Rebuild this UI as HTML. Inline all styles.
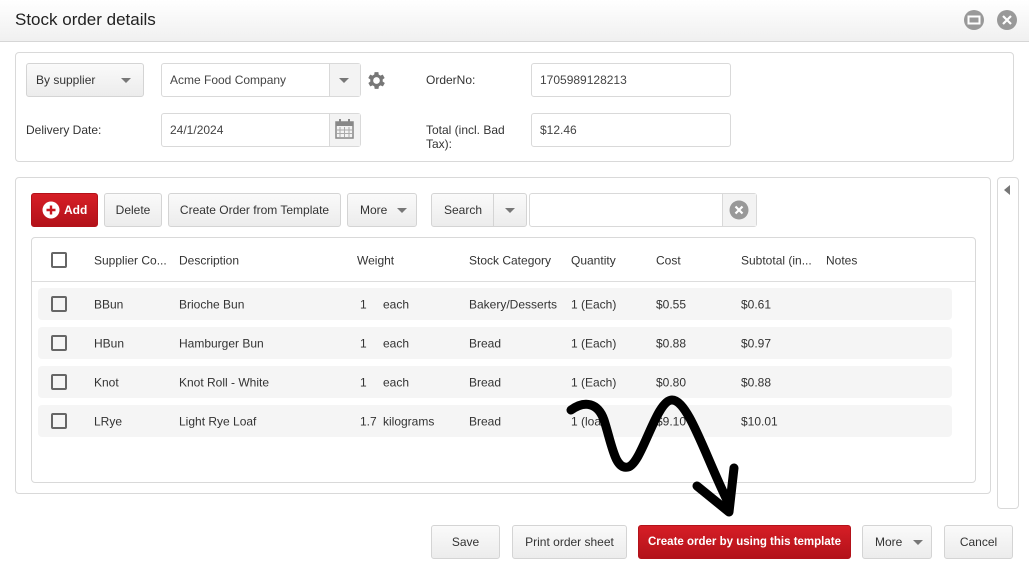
<!DOCTYPE html>
<html><head><style>
*{box-sizing:border-box;margin:0;padding:0}
body{width:1029px;height:575px;background:#fff;font-family:"Liberation Sans",Arial,sans-serif;font-size:12px;color:#333;position:relative;overflow:hidden}
.a{position:absolute}
.box{position:absolute;border:1px solid #d9d9d9;border-radius:4px;background:#fff}
.btn{position:absolute;border:1px solid #d4d4d4;border-radius:3px;background:linear-gradient(#fafafa,#ececec);display:flex;align-items:center;justify-content:center;font-size:12px;color:#333}
.red{background:linear-gradient(#d61e26,#b3121a);border-color:#b3121a;color:#fff;font-weight:bold}
.tri{width:0;height:0;border-left:5px solid transparent;border-right:5px solid transparent;border-top:5px solid #777;position:absolute}
.cb{position:absolute;width:16px;height:16px;border:2px solid #666;border-radius:2px;left:19px}
.row{position:absolute;left:6px;width:914px;height:32px;background:#f5f5f5;border-radius:4px}
.row span,.hd span{position:absolute;top:50%;transform:translateY(-45%);white-space:nowrap}
</style></head><body>
<div class="a" style="left:0;top:0;width:1029px;height:42px;background:linear-gradient(#fff,#f0f0f0);border-bottom:1px solid #d6d6d6"></div>
<div class="a" style="left:15px;top:10px;font-size:17px;color:#222">Stock order details</div>
<svg class="a" style="left:963px;top:9px" width="56" height="22"><circle cx="11" cy="11" r="10" fill="#999"/><rect x="5.5" y="7.5" width="11" height="7" fill="none" stroke="#fff" stroke-width="2"/><circle cx="44" cy="11" r="10" fill="#999"/><path d="M40 7l8 8M48 7l-8 8" stroke="#fff" stroke-width="2.2"/></svg>

<div class="box" style="left:15px;top:52px;width:999px;height:110px"></div>
<div class="btn" style="left:26px;top:63px;width:118px;height:34px;justify-content:flex-start;padding-left:9px">By supplier</div><div class="tri" style="left:121px;top:78px"></div>
<div class="box" style="left:161px;top:63px;width:200px;height:34px;border-radius:3px"></div>
<div class="a" style="left:170px;top:73px;color:#444">Acme Food Company</div>
<div class="a" style="left:329px;top:64px;width:31px;height:32px;border-left:1px solid #d9d9d9;background:#f3f3f3"></div><div class="tri" style="left:339px;top:78px"></div>
<svg class="a" style="left:365px;top:69px" width="23" height="23" viewBox="0 0 24 24"><path fill="#777" d="M19.4 13a7.5 7.5 0 000-2l2.1-1.6-2-3.5-2.5 1a7.6 7.6 0 00-1.7-1L15 3.2h-4l-.4 2.7a7.6 7.6 0 00-1.7 1l-2.5-1-2 3.5L6.6 11a7.5 7.5 0 000 2l-2.1 1.6 2 3.5 2.5-1a7.6 7.6 0 001.7 1l.4 2.7h4l.4-2.7a7.6 7.6 0 001.7-1l2.5 1 2-3.5zM13 15.5a3.5 3.5 0 110-7 3.5 3.5 0 010 7z" transform="translate(-1 0)"/></svg>
<div class="a" style="left:426px;top:73px">OrderNo:</div>
<div class="box" style="left:531px;top:63px;width:200px;height:34px;border-radius:3px"></div><div class="a" style="left:540px;top:73px;color:#444">1705989128213</div>
<div class="a" style="left:26px;top:123px">Delivery Date:</div>
<div class="box" style="left:161px;top:113px;width:200px;height:34px;border-radius:3px"></div><div class="a" style="left:170px;top:123px;color:#444">24/1/2024</div>
<div class="a" style="left:329px;top:114px;width:31px;height:32px;border-left:1px solid #d9d9d9;background:#f3f3f3"></div>
<svg class="a" style="left:335px;top:119px" width="19" height="20"><rect x="1" y="3" width="17" height="16" fill="none" stroke="#888" stroke-width="1.5"/><rect x="1" y="3" width="17" height="4" fill="#888"/><rect x="4" y="0" width="2" height="5" fill="#888"/><rect x="13" y="0" width="2" height="5" fill="#888"/><path d="M5 8v10M9.5 8v10M14 8v10M2 11h15M2 14.5h15" stroke="#aaa"/></svg>
<div class="a" style="left:426px;top:123px;line-height:14px">Total (incl. Bad<br>Tax):</div>
<div class="box" style="left:531px;top:113px;width:200px;height:34px;border-radius:3px"></div><div class="a" style="left:540px;top:123px;color:#444">$12.46</div>

<div class="box" style="left:15px;top:177px;width:976px;height:317px"></div>
<div class="box" style="left:997px;top:177px;width:22px;height:332px"></div>
<div class="a" style="left:1004px;top:185px;width:0;height:0;border-top:5px solid transparent;border-bottom:5px solid transparent;border-right:6px solid #777"></div>

<div class="btn red" style="left:31px;top:193px;width:67px;height:34px;justify-content:flex-start;padding-left:32px">Add</div>
<svg class="a" style="left:42px;top:201px" width="18" height="18"><circle cx="9" cy="9" r="8.5" fill="#fff"/><path d="M9 4.5v9M4.5 9h9" stroke="#c8161e" stroke-width="2.4"/></svg>
<div class="btn" style="left:104px;top:193px;width:58px;height:34px">Delete</div>
<div class="btn" style="left:168px;top:193px;width:173px;height:34px">Create Order from Template</div>
<div class="btn" style="left:347px;top:193px;width:70px;height:34px;justify-content:flex-start;padding-left:12px">More</div><div class="tri" style="left:397px;top:208px"></div>
<div class="btn" style="left:431px;top:193px;width:96px;height:34px;justify-content:flex-start;padding-left:12px">Search</div>
<div class="a" style="left:493px;top:194px;height:32px;border-left:1px solid #d4d4d4"></div><div class="tri" style="left:505px;top:208px"></div>
<div class="box" style="left:529px;top:193px;width:228px;height:34px;border-radius:3px"></div>
<div class="a" style="left:722px;top:194px;width:34px;height:32px;border-left:1px solid #d9d9d9;background:#f3f3f3"></div>
<svg class="a" style="left:729px;top:200px" width="20" height="20"><circle cx="10" cy="10" r="9.5" fill="#999"/><path d="M6.5 6.5l7 7M13.5 6.5l-7 7" stroke="#fff" stroke-width="2.2"/></svg>

<div class="box" style="left:31px;top:237px;width:945px;height:246px">
 <div class="hd a" style="left:0;top:0;width:943px;height:44px;border-bottom:1px solid #ddd">
  <div class="cb" style="top:14px"></div>
  <span style="left:62px">Supplier Co...</span><span style="left:147px">Description</span><span style="left:325px">Weight</span><span style="left:437px">Stock Category</span><span style="left:539px">Quantity</span><span style="left:624px">Cost</span><span style="left:709px">Subtotal (in...</span><span style="left:794px">Notes</span>
 </div>
 <div class="row" style="top:50px"><div class="cb" style="left:13px;top:8px"></div><span style="left:56px">BBun</span><span style="left:141px">Brioche Bun</span><span style="left:322px">1</span><span style="left:345px">each</span><span style="left:431px">Bakery/Desserts</span><span style="left:533px">1 (Each)</span><span style="left:618px">$0.55</span><span style="left:703px">$0.61</span></div>
 <div class="row" style="top:89px"><div class="cb" style="left:13px;top:8px"></div><span style="left:56px">HBun</span><span style="left:141px">Hamburger Bun</span><span style="left:322px">1</span><span style="left:345px">each</span><span style="left:431px">Bread</span><span style="left:533px">1 (Each)</span><span style="left:618px">$0.88</span><span style="left:703px">$0.97</span></div>
 <div class="row" style="top:128px"><div class="cb" style="left:13px;top:8px"></div><span style="left:56px">Knot</span><span style="left:141px">Knot Roll - White</span><span style="left:322px">1</span><span style="left:345px">each</span><span style="left:431px">Bread</span><span style="left:533px">1 (Each)</span><span style="left:618px">$0.80</span><span style="left:703px">$0.88</span></div>
 <div class="row" style="top:167px"><div class="cb" style="left:13px;top:8px"></div><span style="left:56px">LRye</span><span style="left:141px">Light Rye Loaf</span><span style="left:322px">1.7</span><span style="left:345px">kilograms</span><span style="left:431px">Bread</span><span style="left:533px">1 (loaf)</span><span style="left:618px">$9.10</span><span style="left:703px">$10.01</span></div>
</div>

<svg class="a" style="left:0;top:0" width="1029" height="575"><path d="M571 410C585 400 598 403 604 420C612 445 615 470 628 467C642 464 656 400 672 400C688 400 705 455 727 500M697 486L729 512L734 468" fill="none" stroke="#000" stroke-width="9" stroke-linecap="round" stroke-linejoin="round"/></svg>

<div class="btn" style="left:431px;top:525px;width:69px;height:34px">Save</div>
<div class="btn" style="left:512px;top:525px;width:115px;height:34px">Print order sheet</div>
<div class="btn red" style="left:638px;top:525px;width:213px;height:34px;font-size:11.5px">Create order by using this template</div>
<div class="btn" style="left:862px;top:525px;width:70px;height:34px;justify-content:flex-start;padding-left:12px">More</div><div class="tri" style="left:913px;top:540px"></div>
<div class="btn" style="left:944px;top:525px;width:69px;height:34px">Cancel</div>
</body></html>
